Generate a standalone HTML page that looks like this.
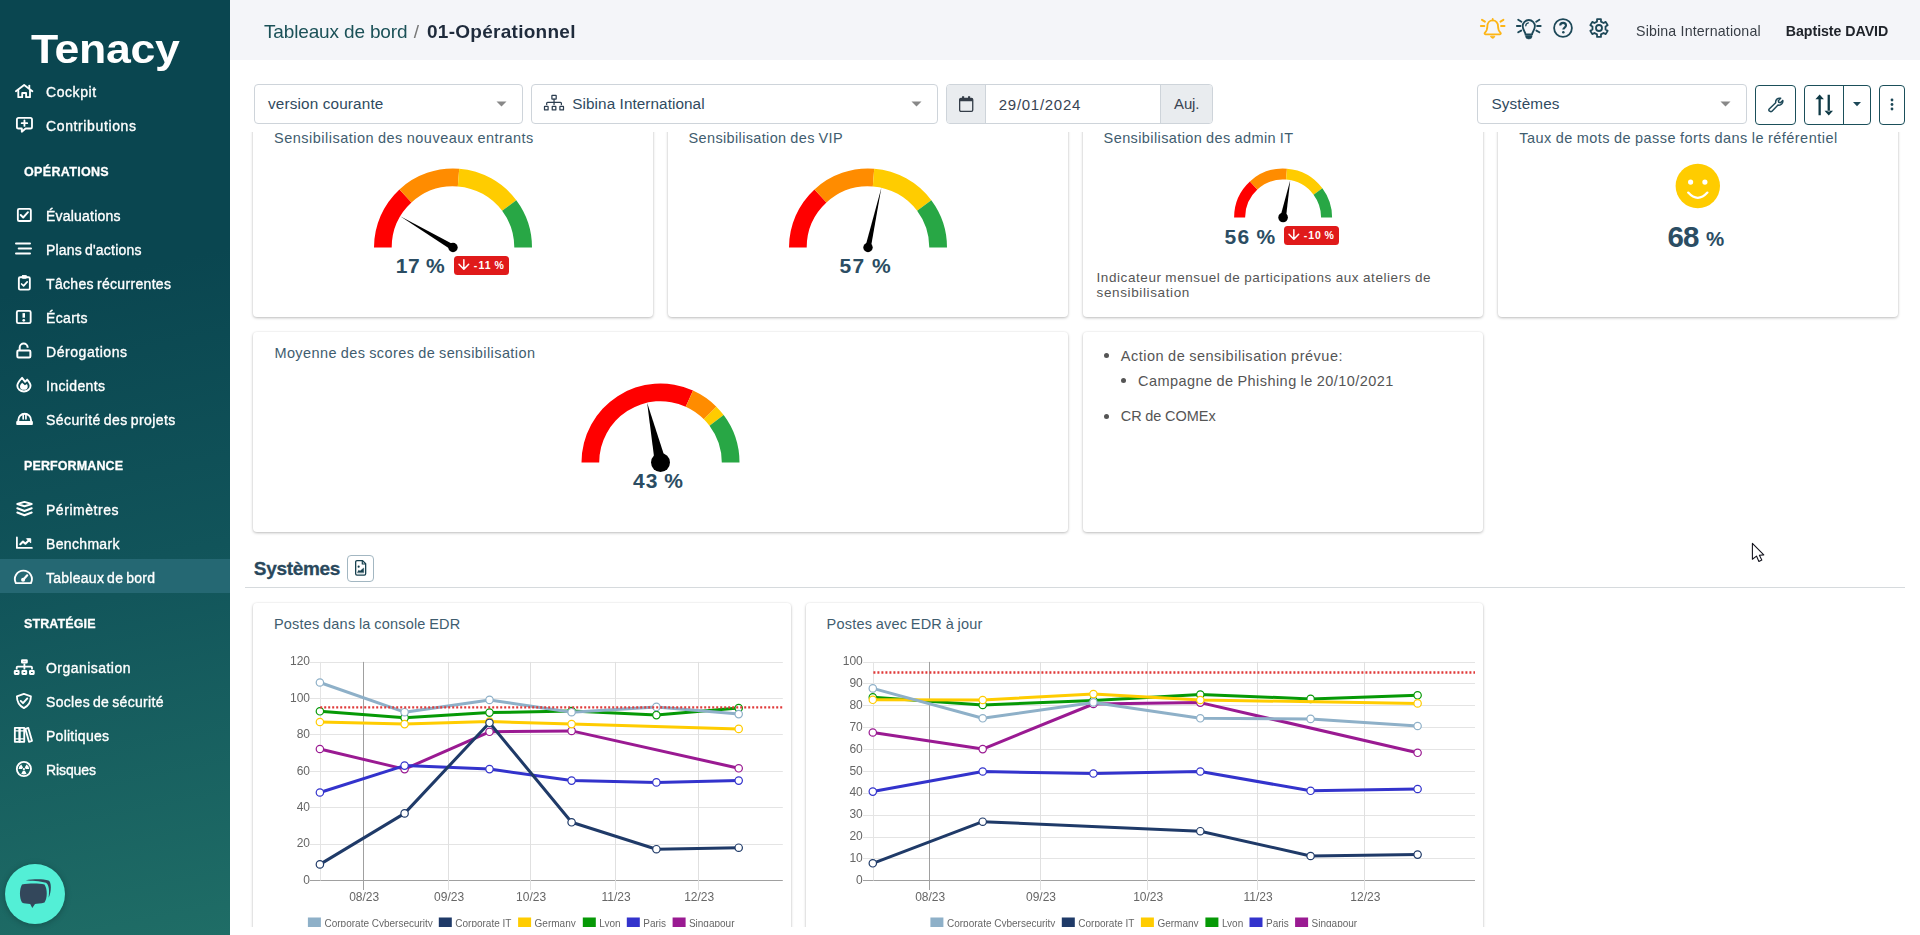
<!DOCTYPE html>
<html lang="fr"><head><meta charset="utf-8"><title>Tenacy - Tableaux de bord</title>
<style>
html,body{margin:0;padding:0}
body{width:1920px;height:935px;overflow:hidden;background:#fff;position:relative;font-family:"Liberation Sans",sans-serif}
.t{position:absolute;white-space:pre;display:block}
.abs,svg.i{position:absolute;display:block}
svg.i{overflow:visible}
#side{position:absolute;left:0;top:0;width:230px;height:935px;will-change:transform;background:linear-gradient(168deg,#0a4650 0%,#0a4650 30%,#11545a 60%,#1f6d66 100%)}
#hdr{position:absolute;left:230px;top:0;width:1690px;height:60px;background:#f4f5f9}
.sel{position:absolute;box-sizing:border-box;border:1px solid #ced4da;border-radius:4px;background:#fff}
.btn{position:absolute;box-sizing:border-box;border:1px solid #1b4f5a;border-radius:4px;background:#fff}
#clip{position:absolute;left:230px;top:132px;width:1690px;height:795px;overflow:hidden}
#in{position:absolute;left:-230px;top:-132px;width:1920px;height:935px}
.card{position:absolute;box-sizing:border-box;background:#fff;border-radius:4px;box-shadow:0 1px 3px rgba(0,0,0,.26),0 0 0 1px rgba(0,0,0,.015)}
</style></head><body>
<div id="side">
<div class="abs" style="left:28px;top:28px;width:160px;height:50px"><span class="t" style="left:2.60px;top:0.64px;font-size:40px;line-height:40px;color:#fff;font-weight:700;transform:scaleX(1.115);transform-origin:0 0;letter-spacing:-0.3px;">Tenacy</span></div>
<div class="abs" style="left:0;top:559px;width:230px;height:34px;background:#256873"></div>
<span class="t" style="left:46.00px;top:85.15px;font-size:14px;line-height:14px;color:#fff;letter-spacing:0.569px;word-spacing:-1.2px;-webkit-text-stroke:0.35px #fff;">Cockpit</span>
<span class="t" style="left:46.00px;top:119.15px;font-size:14px;line-height:14px;color:#fff;letter-spacing:0.625px;word-spacing:-1.2px;-webkit-text-stroke:0.35px #fff;">Contributions</span>
<span class="t" style="left:46.00px;top:209.15px;font-size:14px;line-height:14px;color:#fff;letter-spacing:0.211px;word-spacing:-1.2px;-webkit-text-stroke:0.35px #fff;">Évaluations</span>
<span class="t" style="left:46.00px;top:243.15px;font-size:14px;line-height:14px;color:#fff;letter-spacing:0.212px;word-spacing:-1.2px;-webkit-text-stroke:0.35px #fff;">Plans d'actions</span>
<span class="t" style="left:46.00px;top:277.15px;font-size:14px;line-height:14px;color:#fff;letter-spacing:0.328px;word-spacing:-1.2px;-webkit-text-stroke:0.35px #fff;">Tâches récurrentes</span>
<span class="t" style="left:46.00px;top:311.15px;font-size:14px;line-height:14px;color:#fff;letter-spacing:0.362px;word-spacing:-1.2px;-webkit-text-stroke:0.35px #fff;">Écarts</span>
<span class="t" style="left:46.00px;top:345.15px;font-size:14px;line-height:14px;color:#fff;letter-spacing:0.550px;word-spacing:-1.2px;-webkit-text-stroke:0.35px #fff;">Dérogations</span>
<span class="t" style="left:46.00px;top:379.15px;font-size:14px;line-height:14px;color:#fff;letter-spacing:0.369px;word-spacing:-1.2px;-webkit-text-stroke:0.35px #fff;">Incidents</span>
<span class="t" style="left:46.00px;top:413.15px;font-size:14px;line-height:14px;color:#fff;letter-spacing:0.419px;word-spacing:-1.2px;-webkit-text-stroke:0.35px #fff;">Sécurité des projets</span>
<span class="t" style="left:46.00px;top:503.15px;font-size:14px;line-height:14px;color:#fff;letter-spacing:0.535px;word-spacing:-1.2px;-webkit-text-stroke:0.35px #fff;">Périmètres</span>
<span class="t" style="left:46.00px;top:537.15px;font-size:14px;line-height:14px;color:#fff;letter-spacing:0.336px;word-spacing:-1.2px;-webkit-text-stroke:0.35px #fff;">Benchmark</span>
<span class="t" style="left:46.00px;top:571.15px;font-size:14px;line-height:14px;color:#fff;letter-spacing:0.266px;word-spacing:-1.2px;-webkit-text-stroke:0.35px #fff;">Tableaux de bord</span>
<span class="t" style="left:46.00px;top:661.15px;font-size:14px;line-height:14px;color:#fff;letter-spacing:0.464px;word-spacing:-1.2px;-webkit-text-stroke:0.35px #fff;">Organisation</span>
<span class="t" style="left:46.00px;top:695.15px;font-size:14px;line-height:14px;color:#fff;letter-spacing:0.324px;word-spacing:-1.2px;-webkit-text-stroke:0.35px #fff;">Socles de sécurité</span>
<span class="t" style="left:46.00px;top:729.15px;font-size:14px;line-height:14px;color:#fff;letter-spacing:0.255px;word-spacing:-1.2px;-webkit-text-stroke:0.35px #fff;">Politiques</span>
<span class="t" style="left:46.00px;top:763.15px;font-size:14px;line-height:14px;color:#fff;letter-spacing:-0.099px;word-spacing:-1.2px;-webkit-text-stroke:0.35px #fff;">Risques</span>
<span class="t" style="left:24.00px;top:166.42px;font-size:12.5px;line-height:12.5px;color:#fff;font-weight:700;letter-spacing:0.330px;-webkit-text-stroke:0.3px #fff;">OPÉRATIONS</span>
<span class="t" style="left:24.00px;top:460.42px;font-size:12.5px;line-height:12.5px;color:#fff;font-weight:700;letter-spacing:0.108px;-webkit-text-stroke:0.3px #fff;">PERFORMANCE</span>
<span class="t" style="left:24.00px;top:618.42px;font-size:12.5px;line-height:12.5px;color:#fff;font-weight:700;letter-spacing:0.111px;-webkit-text-stroke:0.3px #fff;">STRATÉGIE</span>
<svg class="i" style="left:14.8px;top:83.9px" width="18.30" height="14.10" viewBox="0 0 18.30 14.10" fill="none" stroke="#fff" stroke-width="1.85" stroke-linecap="round" stroke-linejoin="round"><path d="M0.9 7.3 9.15 0.9 17.4 7.3"/><path d="M3.3 6.6V13.2H7.2V9H11.1V13.2H15V6.6"/><path d="M14.3 1.6V4.2"/></svg>
<svg class="i" style="left:15.8px;top:117.2px" width="16.90" height="15.70" viewBox="0 0 16.90 15.70" fill="none" stroke="#fff" stroke-width="1.85" stroke-linecap="round" stroke-linejoin="round"><path d="M2.5 .9H14.4a1.6 1.6 0 0 1 1.6 1.6V9.9a1.6 1.6 0 0 1-1.6 1.6H9.6L5.8 14.7V11.5H2.5A1.6 1.6 0 0 1 .9 9.9V2.5A1.6 1.6 0 0 1 2.5.9Z"/><path d="M8.45 3.5V8.9M5.7 6.2H11.2"/></svg>
<svg class="i" style="left:16.6px;top:208px" width="14.70" height="13.90" viewBox="0 0 14.70 13.90" fill="none" stroke="#fff" stroke-width="1.85" stroke-linecap="round" stroke-linejoin="round"><rect x=".85" y=".85" width="13" height="12.2" rx="1.4"/><path d="M3.7 7 6.2 9.5 11 4.2" stroke-width="1.9"/></svg>
<svg class="i" style="left:14.6px;top:242px" width="17.00" height="13.00" viewBox="0 0 17.00 13.00" fill="none" stroke="#fff" stroke-width="1.85" stroke-linecap="round" stroke-linejoin="round"><path d="M1 1.5H15M3.7 6.5H16M1 11.5H15" stroke-width="2"/></svg>
<svg class="i" style="left:17.8px;top:275.4px" width="12.70" height="15.50" viewBox="0 0 12.70 15.50" fill="none" stroke="#fff" stroke-width="1.85" stroke-linecap="round" stroke-linejoin="round"><rect x=".85" y="2.2" width="11" height="12.4" rx="1.3"/><rect x="3.9" y=".6" width="4.9" height="2.6" rx=".9" fill="#fff" stroke-width="1"/><path d="M3.6 9 5.6 10.9 9.2 6.9" stroke-width="1.7"/></svg>
<svg class="i" style="left:16.2px;top:309.7px" width="15.50" height="14.00" viewBox="0 0 15.50 14.00" fill="none" stroke="#fff" stroke-width="1.85" stroke-linecap="round" stroke-linejoin="round"><rect x=".85" y=".85" width="13.8" height="12.3" rx="1.4"/><path d="M7.75 3.1V7.7" stroke-width="2.5" stroke-linecap="butt"/><circle cx="7.75" cy="10.3" r="1.35" fill="#fff" stroke="none"/></svg>
<svg class="i" style="left:16.2px;top:342.4px" width="15.70" height="16.80" viewBox="0 0 15.70 16.80" fill="none" stroke="#fff" stroke-width="1.85" stroke-linecap="round" stroke-linejoin="round"><rect x="1.300" y="8.500" width="13.100" height="7" rx="1.200" stroke-width="2"/><path d="M3.700 8.500V5.300A3.980 3.980 0 0 1 11.650 5.300V5.700" stroke-width="2" stroke-linecap="butt"/></svg>
<svg class="i" style="left:16.2px;top:376.2px" width="15.80" height="17.00" viewBox="0 0 15.80 17.00" fill="none" stroke="#fff" stroke-width="1.85" stroke-linecap="round" stroke-linejoin="round"><path d="M6.070 1.830 9.150 5.810 11.200 3.630C12.800 5.500 14.540 7.800 14.540 9.660A6.610 5.900 0 0 1 1.320 9.660C1.320 7 3.800 4.200 6.070 1.830Z" stroke-width="1.900"/><path d="M6.070 6.840 8.890 9.150 10.940 8.120C11.500 9 11.700 9.800 11.700 10.700A3.850 3.100 0 0 1 4 10.700C4 9.300 5 8 6.070 6.840Z" fill="#fff" stroke="none"/></svg>
<svg class="i" style="left:15.5px;top:412.1px" width="17.10" height="13.20" viewBox="0 0 17.10 13.20" fill="none" stroke="#fff" stroke-width="1.85" stroke-linecap="round" stroke-linejoin="round"><path d="M2.300 9.100V8.150A6.370 6.370 0 0 1 15.050 8.150V9.100" stroke-width="1.900"/><path d="M7.200 6.800V1.750H9.950V6.800" stroke-width="1.700"/><rect x=".2" y="9.100" width="16.700" height="3.900" rx=".9" fill="#fff" stroke="none"/></svg>
<svg class="i" style="left:15.6px;top:501.2px" width="17.10" height="15.80" viewBox="0 0 17.10 15.80" fill="none" stroke="#fff" stroke-width="1.85" stroke-linecap="round" stroke-linejoin="round"><path d="M8.500 .9 15.700 3.050 8.500 5.200 1.300 3.050Z" stroke-width="2"/><path d="M1.300 7.200 8.500 10 15.700 7.200M1.300 11.500 8.500 14.300 15.700 11.500" stroke-width="2"/></svg>
<svg class="i" style="left:15.6px;top:537px" width="16.90" height="11.80" viewBox="0 0 16.90 11.80" fill="none" stroke="#fff" stroke-width="1.85" stroke-linecap="round" stroke-linejoin="round"><path d="M.9.500V10.900H15.900" stroke-width="1.800"/><path d="M4.300 7.200 7 4.600 9.400 6.700 13.200 3" stroke-width="2.1"/><path d="M10.900 1.700H14.700V5.500Z" fill="#fff" stroke-width="1"/></svg>
<svg class="i" style="left:14.1px;top:570px" width="18.80" height="14.10" viewBox="0 0 18.80 14.10" fill="none" stroke="#fff" stroke-width="1.85" stroke-linecap="round" stroke-linejoin="round"><path d="M1.900 13.200A8.500 8.500 0 1 1 16.900 13.200Z"/><path d="M9.400 9.600 13.200 5.300" stroke-width="2.200"/><circle cx="9.100" cy="9.800" r="2.050" fill="#fff" stroke="none"/></svg>
<svg class="i" style="left:13.7px;top:659px" width="21.00" height="16.00" viewBox="0 0 21.00 16.00" fill="none" stroke="#fff" stroke-width="1.85" stroke-linecap="round" stroke-linejoin="round"><rect x="8" y="1.200" width="4.800" height="2.400" rx=".3" stroke-width="2"/><path d="M10.400 4.600V10.600M2.700 10.600V8.600a.9 .9 0 0 1 .9-.9H17.100a.9 .9 0 0 1 .9 .9V10.600" stroke-width="1.800" stroke-linecap="butt"/><rect x=".8" y="11.900" width="3.800" height="3" rx=".3" stroke-width="2"/><rect x="8.400" y="11.900" width="3.800" height="3" rx=".3" stroke-width="2"/><rect x="16" y="11.900" width="3.700" height="3" rx=".3" stroke-width="2"/></svg>
<svg class="i" style="left:16.2px;top:692.7px" width="15.80" height="16.00" viewBox="0 0 15.80 16.00" fill="none" stroke="#fff" stroke-width="1.85" stroke-linecap="round" stroke-linejoin="round"><path d="M7.900.900 14.900 3.300C14.900 9 12.500 12.900 7.900 15.100 3.300 12.900.900 9 .900 3.300Z"/><path d="M4.700 7.900 7 10.200 11.300 5.400" stroke-width="1.900"/></svg>
<svg class="i" style="left:14.3px;top:727.2px" width="18.90" height="15.70" viewBox="0 0 18.90 15.70" fill="none" stroke="#fff" stroke-width="1.85" stroke-linecap="round" stroke-linejoin="round"><rect x=".85" y=".85" width="4.700" height="14"/><rect x="5.550" y=".85" width="4.700" height="14"/><path d="M.85 3.800H10.250M.85 11.900H10.250" stroke-width="1.300"/><path d="M11.400 1.900 14.300.900 18 13.800 15 14.800Z"/></svg>
<svg class="i" style="left:16.2px;top:760.9px" width="15.80" height="16.10" viewBox="0 0 15.80 16.10" fill="none" stroke="#fff" stroke-width="1.85" stroke-linecap="round" stroke-linejoin="round"><circle cx="7.900" cy="8.050" r="7.100"/><path d="M8.75 9.52L10.55 12.64A5.3 5.3 0 0 1 5.25 12.64L7.05 9.52A1.7 1.7 0 0 0 8.75 9.52Z" fill="#fff" stroke="none"/><path d="M6.20 8.05L2.60 8.05A5.3 5.3 0 0 1 5.25 3.46L7.05 6.58A1.7 1.7 0 0 0 6.20 8.05Z" fill="#fff" stroke="none"/><path d="M8.75 6.58L10.55 3.46A5.3 5.3 0 0 1 13.20 8.05L9.60 8.05A1.7 1.7 0 0 0 8.75 6.58Z" fill="#fff" stroke="none"/><circle cx="7.900" cy="8.050" r="1.150" fill="#fff" stroke="none"/></svg>
<div class="abs" style="left:5px;top:864px;width:60px;height:60px;border-radius:50%;background:#53efd6;box-shadow:0 1px 6px rgba(0,0,0,.25)"></div>
<svg class="i" style="left:5px;top:864px" width="60" height="60" viewBox="0 0 60 60"><path d="M20.700 16.300C28 15 38 14.800 43.500 16.400 46.500 17.300 46.800 28 43.600 33.700 44.600 27 44.200 21 41 18.800 35 17 26 17 20.700 16.300Z" fill="#33475b"/><path d="M17 20.500C24 19.300 34 19.300 39.500 20.500 42.500 25 42.500 34 39.500 38.500 36 39.500 32 39.900 30 40L27.300 44 25.200 40C22 39.900 19 39.500 17 38.500 14.300 34 14.300 25 17 20.500Z" fill="#33475b"/></svg>
</div>
<div id="hdr"></div><div class="abs" style="left:0;top:0;width:1920px;height:60px;will-change:transform">
<span class="t" style="left:264.00px;top:21.92px;font-size:19px;line-height:19px;color:#1b5158;letter-spacing:-0.152px;">Tableaux de bord</span>
<span class="t" style="left:413.80px;top:21.92px;font-size:19px;line-height:19px;color:#777;">/</span>
<span class="t" style="left:427.00px;top:21.92px;font-size:19px;line-height:19px;color:#1f2b3c;font-weight:700;letter-spacing:0.275px;">01-Opérationnel</span>
<span class="t" style="left:1636.00px;top:23.98px;font-size:14.2px;line-height:14.2px;color:#383e46;letter-spacing:0.165px;">Sibina International</span>
<span class="t" style="left:1785.80px;top:23.98px;font-size:14.2px;line-height:14.2px;color:#20242b;font-weight:700;letter-spacing:-0.047px;">Baptiste DAVID</span>
<svg class="i" style="left:1480.2px;top:17.8px" width="25.60" height="21.20" viewBox="0 0 25.60 21.20" fill="none" stroke="#fdb515" stroke-width="1.8" stroke-linecap="round" stroke-linejoin="round"><path d="M12.700 1V2.300"/><path d="M12.700 2.400c-3.300 0-5.300 2.500-5.300 5.600 0 4-1.300 5.600-2.600 6.800-.5.500-.2 1.500.6 1.500H20c.8 0 1.100-1 .6-1.500-1.300-1.200-2.600-2.800-2.600-6.800 0-3.100-2-5.600-5.300-5.600Z"/><path d="M10.700 18.600c.3 1 1.100 1.600 2 1.600s1.700-.6 2-1.600Z" fill="#fdb515" stroke-width="1"/><path d="M2 1.800 4.900 3.600M.9 8H4.300M23.400 1.800 20.500 3.600M24.500 8H21.100" stroke-width="2"/></svg>
<svg class="i" style="left:1515.6px;top:17.8px" width="25.60" height="21.20" viewBox="0 0 25.60 21.20" fill="none" stroke="#1d4858" stroke-width="1.8" stroke-linecap="round" stroke-linejoin="round"><path d="M9.500 16.400c0-2.300-2.800-4-2.800-8.300a6.100 6.100 0 0 1 12.200 0c0 4.300-2.800 6-2.800 8.300Z"/><path d="M9.800 7.800a3 3 0 0 1 2.600-3" stroke-width="1.300"/><path d="M9.600 17.600H16V18.600a3.200 2.400 0 0 1-6.400 0Z" fill="#1d4858" stroke-width=".6"/><path d="M2.200 1.700 5.400 3.700M.9 8H4.500M2.200 14.300 5.200 12.600M23.400 1.700 20.200 3.700M24.700 8H21.100M23.400 14.300 20.400 12.600" stroke-width="1.900"/></svg>
<svg class="i" style="left:1553px;top:18.4px" width="20.00" height="20.00" viewBox="0 0 20.00 20.00" fill="none" stroke="#1d4858" stroke-width="1.8" stroke-linecap="round" stroke-linejoin="round"><circle cx="10" cy="10" r="8.900"/><path d="M7.200 7.600a2.900 2.700 0 0 1 5.800 0c0 1.800-2.700 2.100-2.700 3.900" stroke-width="2.100" stroke-linecap="butt"/><circle cx="10.300" cy="14.300" r="1.250" fill="#1d4858" stroke="none"/></svg>
<svg class="i" style="left:1589.1px;top:18.4px" width="20.00" height="20.00" viewBox="0 0 20.00 20.00" fill="none" stroke="#1d4858" stroke-width="1.8" stroke-linecap="round" stroke-linejoin="round"><path d="M8.02 3.60L8.05 1.11L11.95 1.11L11.98 3.60L14.55 5.08L16.72 3.87L18.67 7.24L16.53 8.51L16.53 11.49L18.67 12.76L16.72 16.13L14.55 14.92L11.98 16.40L11.95 18.89L8.05 18.89L8.02 16.40L5.45 14.92L3.28 16.13L1.33 12.76L3.47 11.49L3.47 8.51L1.33 7.24L3.28 3.87L5.45 5.08Z"/><circle cx="10" cy="10" r="3"/></svg>
</div>
<div class="sel" style="left:254px;top:84px;width:269px;height:40px"></div>
<span class="t" style="left:268.00px;top:96.35px;font-size:15.3px;line-height:15.3px;color:#2f4a60;letter-spacing:0.147px;">version courante</span>
<svg class="i" style="left:496px;top:101px" width="11" height="6" viewBox="0 0 11 6"><path d="M.5.500H10.500L5.500 5.500Z" fill="#888"/></svg>
<div class="sel" style="left:531px;top:84px;width:407px;height:40px"></div>
<svg class="i" style="left:544.4px;top:95px" width="20.20" height="15.80" viewBox="0 0 20.20 15.80" fill="none" stroke="#2c3e50" stroke-width="1.25" stroke-linecap="round" stroke-linejoin="round"><rect x="7.900" y=".4" width="4.300" height="3.600" rx=".3"/><path d="M10.050 4.200V9.400M2.700 9.600V8.300a.9 .9 0 0 1 .9-.9H16.500a.9 .9 0 0 1 .9 .9V9.600"/><rect x=".5" y="11.400" width="3.600" height="3.600" rx=".3"/><rect x="8.250" y="11.400" width="3.600" height="3.600" rx=".3"/><rect x="15.900" y="11.400" width="3.600" height="3.600" rx=".3"/></svg>
<span class="t" style="left:572.30px;top:96.35px;font-size:15.3px;line-height:15.3px;color:#2f4a60;letter-spacing:0.070px;">Sibina International</span>
<svg class="i" style="left:910.500px;top:101px" width="11" height="6" viewBox="0 0 11 6"><path d="M.5.500H10.500L5.500 5.500Z" fill="#888"/></svg>
<div class="sel" style="left:946px;top:84px;width:267px;height:40px;overflow:hidden"><div class="abs" style="left:0;top:0;width:38px;height:38px;background:#e9ecef;border-right:1px solid #ced4da"></div><div class="abs" style="left:213px;top:0;width:52px;height:38px;background:#e9ecef;border-left:1px solid #ced4da"></div></div>
<svg class="i" style="left:959px;top:96px" width="14.40" height="16.10" viewBox="0 0 14.40 16.10" fill="none" stroke="#343d48" stroke-width="1.3" stroke-linecap="round" stroke-linejoin="round"><rect x=".65" y="2.400" width="13.100" height="13" rx="1.300"/><path d="M.65 3.700a1.300 1.300 0 0 1 1.300-1.300H12.450a1.300 1.300 0 0 1 1.300 1.300V5.200H.65Z" fill="#343d48" stroke="none"/><path d="M4.100 .2V2.600M10.100 .2V2.600" stroke-width="2.100" stroke-linecap="butt"/></svg>
<span class="t" style="left:998.80px;top:96.60px;font-size:15px;line-height:15px;color:#384454;letter-spacing:0.714px;">29/01/2024</span>
<span class="t" style="left:1174.00px;top:95.60px;font-size:15px;line-height:15px;color:#3a4452;letter-spacing:-0.120px;">Auj.</span>
<div class="sel" style="left:1477px;top:84px;width:270px;height:40px"></div>
<span class="t" style="left:1491.50px;top:96.35px;font-size:15.3px;line-height:15.3px;color:#2f4a60;letter-spacing:0.121px;">Systèmes</span>
<svg class="i" style="left:1719.500px;top:101px" width="11" height="6" viewBox="0 0 11 6"><path d="M.5.500H10.500L5.500 5.500Z" fill="#888"/></svg>
<div class="btn" style="left:1755px;top:85px;width:41px;height:40px"></div>
<svg class="i" style="left:1767.600px;top:96.600px" width="15.600" height="15.600" viewBox="0 0 17 17" fill="none" stroke="#1d4858" stroke-width="1.600" stroke-linecap="round" stroke-linejoin="round"><path d="M2.300 15.600a1.500 1.500 0 0 1-1-2.500L8.400 6.300A4.300 4.300 0 0 1 13.800 1.400L11.200 4 11.700 5.800 13.500 6.300 16.100 3.700A4.300 4.300 0 0 1 10.900 8.800L4.100 15.800A1.500 1.500 0 0 1 2.300 15.600Z"/></svg>
<div class="btn" style="left:1804px;top:85px;width:67px;height:40px"></div><div class="abs" style="left:1843px;top:85px;width:1px;height:40px;background:#1b4f5a"></div>
<svg class="i" style="left:1814px;top:94px" width="20" height="22" viewBox="0 0 20 22" fill="#0f3a46" stroke="none"><path d="M4.500 4.500H6.800V21.300H4.500ZM5.650 .5 9.900 5.300H1.400Z"/><path d="M13.600 .8H15.900V17.600H13.600ZM14.750 21.600 19 16.800H10.500Z"/></svg>
<svg class="i" style="left:1852.900px;top:101.900px" width="8" height="4.300" viewBox="0 0 8 4.300"><path d="M0 0H8L4 4.300Z" fill="#1d4858"/></svg>
<div class="btn" style="left:1879px;top:85px;width:26px;height:40px"></div>
<svg class="i" style="left:1889.700px;top:97.800px" width="4" height="15" viewBox="0 0 4 15" fill="#1d4858"><circle cx="2" cy="2" r="1.400"/><circle cx="2" cy="6.500" r="1.400"/><circle cx="2" cy="11" r="1.400"/></svg>
<div id="clip"><div id="in">
<div class="card" style="left:253px;top:60px;width:400px;height:257px"></div>
<div class="card" style="left:668px;top:60px;width:400px;height:257px"></div>
<div class="card" style="left:1083px;top:60px;width:400px;height:257px"></div>
<div class="card" style="left:1498px;top:60px;width:400px;height:257px"></div>
<div class="card" style="left:253px;top:332px;width:815px;height:200px"></div>
<div class="card" style="left:1083px;top:332px;width:400px;height:200px"></div>
<div class="card" style="left:253px;top:603px;width:538px;height:360px"></div>
<div class="card" style="left:806px;top:603px;width:677px;height:360px"></div>
<span class="t" style="left:274.00px;top:130.83px;font-size:14.5px;line-height:14.5px;color:#3f5d6f;letter-spacing:0.491px;word-spacing:-0.6px;">Sensibilisation des nouveaux entrants</span>
<span class="t" style="left:688.60px;top:130.83px;font-size:14.5px;line-height:14.5px;color:#3f5d6f;letter-spacing:0.349px;word-spacing:-0.6px;">Sensibilisation des VIP</span>
<span class="t" style="left:1103.60px;top:130.83px;font-size:14.5px;line-height:14.5px;color:#3f5d6f;letter-spacing:0.398px;word-spacing:-0.6px;">Sensibilisation des admin IT</span>
<span class="t" style="left:1519.20px;top:130.83px;font-size:14.5px;line-height:14.5px;color:#3f5d6f;letter-spacing:0.482px;word-spacing:-0.6px;">Taux de mots de passe forts dans le référentiel</span>
<span class="t" style="left:274.40px;top:345.83px;font-size:14.5px;line-height:14.5px;color:#3f5d6f;letter-spacing:0.409px;word-spacing:-0.6px;">Moyenne des scores de sensibilisation</span>
<span class="t" style="left:274.00px;top:616.83px;font-size:14.5px;line-height:14.5px;color:#3f5d6f;letter-spacing:0.193px;word-spacing:-0.6px;">Postes dans la console EDR</span>
<span class="t" style="left:826.60px;top:616.83px;font-size:14.5px;line-height:14.5px;color:#3f5d6f;letter-spacing:0.199px;word-spacing:-0.6px;">Postes avec EDR à jour</span>
<svg class="i" style="left:0;top:0" width="1920" height="935" viewBox="0 0 1920 935"><path d="M374.00 247.50A79 79 0 0 1 399.47 189.40L411.46 202.42A61.3 61.3 0 0 0 391.70 247.50Z" fill="#ff0000"/><path d="M399.47 189.40A79 79 0 0 1 459.20 168.74L457.81 186.39A61.3 61.3 0 0 0 411.46 202.42Z" fill="#ff8c00"/><path d="M459.20 168.74A79 79 0 0 1 516.32 200.27L502.14 210.85A61.3 61.3 0 0 0 457.81 186.39Z" fill="#ffcc00"/><path d="M516.32 200.27A79 79 0 0 1 532.00 247.50L514.30 247.50A61.3 61.3 0 0 0 502.14 210.85Z" fill="#28a745"/><path d="M400.24 216.30L454.44 245.07L451.56 249.93Z" fill="#000"/><circle cx="453" cy="247.5" r="4.7" fill="#000"/><path d="M789.00 247.50A79 79 0 0 1 814.47 189.40L826.46 202.42A61.3 61.3 0 0 0 806.70 247.50Z" fill="#ff0000"/><path d="M814.47 189.40A79 79 0 0 1 874.20 168.74L872.81 186.39A61.3 61.3 0 0 0 826.46 202.42Z" fill="#ff8c00"/><path d="M874.20 168.74A79 79 0 0 1 931.32 200.27L917.14 210.85A61.3 61.3 0 0 0 872.81 186.39Z" fill="#ffcc00"/><path d="M931.32 200.27A79 79 0 0 1 947.00 247.50L929.30 247.50A61.3 61.3 0 0 0 917.14 210.85Z" fill="#28a745"/><path d="M881.37 187.68L870.75 248.12L865.25 246.88Z" fill="#000"/><circle cx="868" cy="247.5" r="4.7" fill="#000"/><path d="M1234.10 217.50A49 49 0 0 1 1249.90 181.47L1257.35 189.56A38 38 0 0 0 1245.10 217.50Z" fill="#ff0000"/><path d="M1249.90 181.47A49 49 0 0 1 1286.94 168.65L1286.08 179.62A38 38 0 0 0 1257.35 189.56Z" fill="#ff8c00"/><path d="M1286.94 168.65A49 49 0 0 1 1322.38 188.20L1313.56 194.78A38 38 0 0 0 1286.08 179.62Z" fill="#ffcc00"/><path d="M1322.38 188.20A49 49 0 0 1 1332.10 217.50L1321.10 217.50A38 38 0 0 0 1313.56 194.78Z" fill="#28a745"/><path d="M1290.22 180.17L1285.93 218.04L1280.27 216.96Z" fill="#000"/><circle cx="1283.1" cy="217.5" r="4.8" fill="#000"/><path d="M581.50 462.50A79 79 0 0 1 693.01 390.50L685.73 406.63A61.3 61.3 0 0 0 599.20 462.50Z" fill="#ff0000"/><path d="M693.01 390.50A79 79 0 0 1 716.36 406.64L703.85 419.15A61.3 61.3 0 0 0 685.73 406.63Z" fill="#ff8c00"/><path d="M716.36 406.64A79 79 0 0 1 723.68 415.07L709.52 425.69A61.3 61.3 0 0 0 703.85 419.15Z" fill="#ffcc00"/><path d="M723.68 415.07A79 79 0 0 1 739.50 462.50L721.80 462.50A61.3 61.3 0 0 0 709.52 425.69Z" fill="#28a745"/><path d="M647.13 402.68L666.06 461.26L654.94 463.74Z" fill="#000"/><circle cx="660.5" cy="462.5" r="9.5" fill="#000"/><circle cx="1697.800" cy="186" r="22.200" fill="#ffcc00"/><circle cx="1690.600" cy="182.100" r="2.600" fill="#fff"/><circle cx="1704.900" cy="182.100" r="2.600" fill="#fff"/><path d="M1688.200 192.600Q1697.800 203.200 1707.400 192.600" fill="none" stroke="#fff" stroke-width="2.300" stroke-linecap="round"/></svg>
<span class="t" style="left:395.70px;top:255.22px;font-size:21px;line-height:21px;color:#2b4d63;font-weight:700;letter-spacing:0.743px;word-spacing:-1.2px;">17 %</span>
<span class="t" style="left:839.40px;top:255.22px;font-size:21px;line-height:21px;color:#2b4d63;font-weight:700;letter-spacing:1.509px;word-spacing:-1.2px;">57 %</span>
<span class="t" style="left:1224.60px;top:226.22px;font-size:21px;line-height:21px;color:#2b4d63;font-weight:700;letter-spacing:1.276px;word-spacing:-1.2px;">56 %</span>
<span class="t" style="left:632.90px;top:470.22px;font-size:21px;line-height:21px;color:#2b4d63;font-weight:700;letter-spacing:1.143px;word-spacing:-1.2px;">43 %</span>
<span class="t" style="left:1667.50px;top:221.83px;font-size:29.5px;line-height:29.5px;color:#2b4d63;font-weight:700;letter-spacing:-0.828px;">68</span>
<span class="t" style="left:1705.90px;top:229.45px;font-size:20.5px;line-height:20.5px;color:#2b4d63;font-weight:700;letter-spacing:-0.334px;">%</span>
<div class="abs" style="left:454.1px;top:255.9px;width:55.100px;height:19px;border-radius:3.500px;background:#e01a1a"></div><svg class="i" style="left:458.40000000000003px;top:259.0px" width="11.700" height="11.200" viewBox="0 0 11.700 11.200" fill="none" stroke="#fff" stroke-width="1.500" stroke-linecap="round" stroke-linejoin="round"><path d="M5.850 .8V10M1 5.200 5.850 10.200 10.700 5.200"/></svg><span class="t" style="left:473.80px;top:260.11px;font-size:10.5px;line-height:10.5px;color:#fff;font-weight:700;letter-spacing:1.086px;word-spacing:-1.2px;">-11 %</span>
<div class="abs" style="left:1284.1px;top:225.9px;width:55.100px;height:19px;border-radius:3.500px;background:#e01a1a"></div><svg class="i" style="left:1288.3999999999999px;top:229.0px" width="11.700" height="11.200" viewBox="0 0 11.700 11.200" fill="none" stroke="#fff" stroke-width="1.500" stroke-linecap="round" stroke-linejoin="round"><path d="M5.850 .8V10M1 5.200 5.850 10.200 10.700 5.200"/></svg><span class="t" style="left:1303.80px;top:230.11px;font-size:10.5px;line-height:10.5px;color:#fff;font-weight:700;letter-spacing:0.941px;word-spacing:-1.2px;">-10 %</span>
<span class="t" style="left:1096.50px;top:270.77px;font-size:13.5px;line-height:13.5px;color:#555;letter-spacing:0.575px;word-spacing:-0.5px;">Indicateur mensuel de participations aux ateliers de</span>
<span class="t" style="left:1096.50px;top:285.57px;font-size:13.5px;line-height:13.5px;color:#555;letter-spacing:0.625px;">sensibilisation</span>
<span class="t" style="left:1120.80px;top:348.53px;font-size:14.5px;line-height:14.5px;color:#555;letter-spacing:0.511px;word-spacing:-0.6px;">Action de sensibilisation prévue:</span>
<span class="t" style="left:1138.00px;top:373.53px;font-size:14.5px;line-height:14.5px;color:#555;letter-spacing:0.456px;word-spacing:-0.6px;">Campagne de Phishing le 20/10/2021</span>
<span class="t" style="left:1120.80px;top:409.43px;font-size:14.5px;line-height:14.5px;color:#555;letter-spacing:0.031px;word-spacing:-0.6px;">CR de COMEx</span>
<div class="abs" style="left:1103.6px;top:353.1px;width:5.400px;height:5.400px;border-radius:50%;background:#555"></div>
<div class="abs" style="left:1120.6px;top:378.1px;width:5.400px;height:5.400px;border-radius:50%;background:#555"></div>
<div class="abs" style="left:1103.6px;top:414.0px;width:5.400px;height:5.400px;border-radius:50%;background:#555"></div>
<span class="t" style="left:253.80px;top:558.92px;font-size:19px;line-height:19px;color:#29485c;font-weight:700;letter-spacing:-0.319px;-webkit-text-stroke:0.3px #29485c;">Systèmes</span>
<div class="abs" style="left:347px;top:555px;width:27px;height:27px;box-sizing:border-box;border:1px solid #a3b7c2;border-radius:4px"></div>
<svg class="i" style="left:354.9px;top:560px" width="11.30" height="15.80" viewBox="0 0 11.30 15.80" fill="none" stroke="#17414f" stroke-width="1.3" stroke-linecap="round" stroke-linejoin="round"><path d="M.65 2A1.350 1.350 0 0 1 2 .65H7.600L10.650 3.700V13.800A1.350 1.350 0 0 1 9.300 15.150H2A1.350 1.350 0 0 1 .65 13.800Z"/><path d="M7.300 .9V4H10.400" stroke-width="1.200"/><circle cx="3.650" cy="6.700" r="1.100" fill="#17414f" stroke="none"/><path d="M2.550 12.500 3.650 10.200 5.100 11 8.700 8V12.500Z" fill="#17414f" stroke-width=".4"/></svg>
<div class="abs" style="left:245px;top:587px;width:1660px;height:1px;background:#d6dadd"></div>
<svg class="i" style="left:0;top:0;will-change:transform;font-family:'Liberation Sans',sans-serif" width="1920" height="935" viewBox="0 0 1920 935"><path d="M310 880.5H782.8" stroke="#a0a0a0" stroke-width="1"/><text x="310" y="883.8" text-anchor="end" font-size="12" fill="#666">0</text><path d="M310 844.5H782.8" stroke="#e4e4e4" stroke-width="1"/><text x="310" y="847.4" text-anchor="end" font-size="12" fill="#666">20</text><path d="M310 807.5H782.8" stroke="#e4e4e4" stroke-width="1"/><text x="310" y="810.9" text-anchor="end" font-size="12" fill="#666">40</text><path d="M310 771.5H782.8" stroke="#e4e4e4" stroke-width="1"/><text x="310" y="774.5" text-anchor="end" font-size="12" fill="#666">60</text><path d="M310 734.5H782.8" stroke="#e4e4e4" stroke-width="1"/><text x="310" y="738.1" text-anchor="end" font-size="12" fill="#666">80</text><path d="M310 698.5H782.8" stroke="#e4e4e4" stroke-width="1"/><text x="310" y="701.6" text-anchor="end" font-size="12" fill="#666">100</text><path d="M310 662.5H782.8" stroke="#e4e4e4" stroke-width="1"/><text x="310" y="665.2" text-anchor="end" font-size="12" fill="#666">120</text><path d="M320.5 661.9V880.5" stroke="#e4e4e4" stroke-width="1"/><path d="M363.5 661.9V890.0" stroke="#a0a0a0" stroke-width="1"/><text x="364.2" y="901" text-anchor="middle" font-size="12" fill="#666">08/23</text><path d="M448.5 661.9V890.0" stroke="#e0e0e0" stroke-width="1"/><text x="449.1" y="901" text-anchor="middle" font-size="12" fill="#666">09/23</text><path d="M530.5 661.9V890.0" stroke="#e0e0e0" stroke-width="1"/><text x="531.1" y="901" text-anchor="middle" font-size="12" fill="#666">10/23</text><path d="M615.5 661.9V890.0" stroke="#e0e0e0" stroke-width="1"/><text x="616.0" y="901" text-anchor="middle" font-size="12" fill="#666">11/23</text><path d="M698.5 661.9V890.0" stroke="#e0e0e0" stroke-width="1"/><text x="699.2" y="901" text-anchor="middle" font-size="12" fill="#666">12/23</text><path d="M319.9 749.0L404.6 769.1L489.5 731.8L571.6 730.9L738.7 768.3" fill="none" stroke="#9a1a92" stroke-width="3" stroke-linejoin="round"/><circle cx="319.9" cy="749.0" r="3.700" fill="#fff" stroke="#9a1a92" stroke-width="1.200"/><circle cx="404.6" cy="769.1" r="3.700" fill="#fff" stroke="#9a1a92" stroke-width="1.200"/><circle cx="489.5" cy="731.8" r="3.700" fill="#fff" stroke="#9a1a92" stroke-width="1.200"/><circle cx="571.6" cy="730.9" r="3.700" fill="#fff" stroke="#9a1a92" stroke-width="1.200"/><circle cx="738.7" cy="768.3" r="3.700" fill="#fff" stroke="#9a1a92" stroke-width="1.200"/><path d="M319.9 792.5L404.6 765.6L489.5 769.1L571.6 780.6L656.4 782.4L738.7 780.6" fill="none" stroke="#3333cc" stroke-width="3" stroke-linejoin="round"/><circle cx="319.9" cy="792.5" r="3.700" fill="#fff" stroke="#3333cc" stroke-width="1.200"/><circle cx="404.6" cy="765.6" r="3.700" fill="#fff" stroke="#3333cc" stroke-width="1.200"/><circle cx="489.5" cy="769.1" r="3.700" fill="#fff" stroke="#3333cc" stroke-width="1.200"/><circle cx="571.6" cy="780.6" r="3.700" fill="#fff" stroke="#3333cc" stroke-width="1.200"/><circle cx="656.4" cy="782.4" r="3.700" fill="#fff" stroke="#3333cc" stroke-width="1.200"/><circle cx="738.7" cy="780.6" r="3.700" fill="#fff" stroke="#3333cc" stroke-width="1.200"/><path d="M319.9 711.3L404.6 717.7L489.5 712.6L571.6 711.0L656.4 715.1L738.7 708.1" fill="none" stroke="#069906" stroke-width="3" stroke-linejoin="round"/><circle cx="319.9" cy="711.3" r="3.700" fill="#fff" stroke="#069906" stroke-width="1.200"/><circle cx="404.6" cy="717.7" r="3.700" fill="#fff" stroke="#069906" stroke-width="1.200"/><circle cx="489.5" cy="712.6" r="3.700" fill="#fff" stroke="#069906" stroke-width="1.200"/><circle cx="571.6" cy="711.0" r="3.700" fill="#fff" stroke="#069906" stroke-width="1.200"/><circle cx="656.4" cy="715.1" r="3.700" fill="#fff" stroke="#069906" stroke-width="1.200"/><circle cx="738.7" cy="708.1" r="3.700" fill="#fff" stroke="#069906" stroke-width="1.200"/><path d="M319.9 722.0L404.6 724.1L489.5 721.6L571.6 724.1L738.7 728.9" fill="none" stroke="#ffcc00" stroke-width="3" stroke-linejoin="round"/><circle cx="319.9" cy="722.0" r="3.700" fill="#fff" stroke="#ffcc00" stroke-width="1.200"/><circle cx="404.6" cy="724.1" r="3.700" fill="#fff" stroke="#ffcc00" stroke-width="1.200"/><circle cx="489.5" cy="721.6" r="3.700" fill="#fff" stroke="#ffcc00" stroke-width="1.200"/><circle cx="571.6" cy="724.1" r="3.700" fill="#fff" stroke="#ffcc00" stroke-width="1.200"/><circle cx="738.7" cy="728.9" r="3.700" fill="#fff" stroke="#ffcc00" stroke-width="1.200"/><path d="M319.9 864.4L404.6 813.4L489.5 722.8L571.6 822.3L656.4 849.2L738.7 847.7" fill="none" stroke="#1f3a68" stroke-width="3" stroke-linejoin="round"/><circle cx="319.9" cy="864.4" r="3.700" fill="#fff" stroke="#1f3a68" stroke-width="1.200"/><circle cx="404.6" cy="813.4" r="3.700" fill="#fff" stroke="#1f3a68" stroke-width="1.200"/><circle cx="489.5" cy="722.8" r="3.700" fill="#fff" stroke="#1f3a68" stroke-width="1.200"/><circle cx="571.6" cy="822.3" r="3.700" fill="#fff" stroke="#1f3a68" stroke-width="1.200"/><circle cx="656.4" cy="849.2" r="3.700" fill="#fff" stroke="#1f3a68" stroke-width="1.200"/><circle cx="738.7" cy="847.7" r="3.700" fill="#fff" stroke="#1f3a68" stroke-width="1.200"/><path d="M319.9 682.5L404.6 712.2L489.5 699.9L571.6 712.2L656.4 706.9L738.7 714.1" fill="none" stroke="#8eb0c8" stroke-width="3" stroke-linejoin="round"/><circle cx="319.9" cy="682.5" r="3.700" fill="#fff" stroke="#8eb0c8" stroke-width="1.200"/><circle cx="404.6" cy="712.2" r="3.700" fill="#fff" stroke="#8eb0c8" stroke-width="1.200"/><circle cx="489.5" cy="699.9" r="3.700" fill="#fff" stroke="#8eb0c8" stroke-width="1.200"/><circle cx="571.6" cy="712.2" r="3.700" fill="#fff" stroke="#8eb0c8" stroke-width="1.200"/><circle cx="656.4" cy="706.9" r="3.700" fill="#fff" stroke="#8eb0c8" stroke-width="1.200"/><circle cx="738.7" cy="714.1" r="3.700" fill="#fff" stroke="#8eb0c8" stroke-width="1.200"/><path d="M320.2 707.4H782.8" stroke="#e03a3a" stroke-width="2.400" stroke-dasharray="2 2"/><rect x="307.9" y="917.500" width="13" height="10" fill="#8eb0c8"/><text x="324.5" y="927.200" font-size="10" fill="#666">Corporate Cybersecurity</text><rect x="438.8" y="917.500" width="13" height="10" fill="#1f3a68"/><text x="455.3" y="927.200" font-size="10" fill="#666">Corporate IT</text><rect x="518.1" y="917.500" width="13" height="10" fill="#ffcc00"/><text x="534.6" y="927.200" font-size="10" fill="#666">Germany</text><rect x="582.8" y="917.500" width="13" height="10" fill="#069906"/><text x="599.3" y="927.200" font-size="10" fill="#666">Lyon</text><rect x="626.8" y="917.500" width="13" height="10" fill="#3333cc"/><text x="643.3" y="927.200" font-size="10" fill="#666">Paris</text><rect x="672.6" y="917.500" width="13" height="10" fill="#9a1a92"/><text x="688.9" y="927.200" font-size="10" fill="#666">Singapour</text><path d="M863 880.5H1475" stroke="#a0a0a0" stroke-width="1"/><text x="862.8" y="883.8" text-anchor="end" font-size="12" fill="#666">0</text><path d="M863 858.5H1475" stroke="#e4e4e4" stroke-width="1"/><text x="862.8" y="861.9" text-anchor="end" font-size="12" fill="#666">10</text><path d="M863 837.5H1475" stroke="#e4e4e4" stroke-width="1"/><text x="862.8" y="840.1" text-anchor="end" font-size="12" fill="#666">20</text><path d="M863 815.5H1475" stroke="#e4e4e4" stroke-width="1"/><text x="862.8" y="818.2" text-anchor="end" font-size="12" fill="#666">30</text><path d="M863 793.5H1475" stroke="#e4e4e4" stroke-width="1"/><text x="862.8" y="796.4" text-anchor="end" font-size="12" fill="#666">40</text><path d="M863 771.5H1475" stroke="#e4e4e4" stroke-width="1"/><text x="862.8" y="774.5" text-anchor="end" font-size="12" fill="#666">50</text><path d="M863 749.5H1475" stroke="#e4e4e4" stroke-width="1"/><text x="862.8" y="752.6" text-anchor="end" font-size="12" fill="#666">60</text><path d="M863 727.5H1475" stroke="#e4e4e4" stroke-width="1"/><text x="862.8" y="730.8" text-anchor="end" font-size="12" fill="#666">70</text><path d="M863 705.5H1475" stroke="#e4e4e4" stroke-width="1"/><text x="862.8" y="708.9" text-anchor="end" font-size="12" fill="#666">80</text><path d="M863 683.5H1475" stroke="#e4e4e4" stroke-width="1"/><text x="862.8" y="687.1" text-anchor="end" font-size="12" fill="#666">90</text><path d="M863 662.5H1475" stroke="#e4e4e4" stroke-width="1"/><text x="862.8" y="665.2" text-anchor="end" font-size="12" fill="#666">100</text><path d="M873.5 661.9V880.5" stroke="#e4e4e4" stroke-width="1"/><path d="M929.5 661.9V890.0" stroke="#a0a0a0" stroke-width="1"/><text x="930.2" y="901" text-anchor="middle" font-size="12" fill="#666">08/23</text><path d="M1040.5 661.9V890.0" stroke="#e0e0e0" stroke-width="1"/><text x="1041.0" y="901" text-anchor="middle" font-size="12" fill="#666">09/23</text><path d="M1147.5 661.9V890.0" stroke="#e0e0e0" stroke-width="1"/><text x="1148.2" y="901" text-anchor="middle" font-size="12" fill="#666">10/23</text><path d="M1257.5 661.9V890.0" stroke="#e0e0e0" stroke-width="1"/><text x="1258.0" y="901" text-anchor="middle" font-size="12" fill="#666">11/23</text><path d="M1364.5 661.9V890.0" stroke="#e0e0e0" stroke-width="1"/><text x="1365.3" y="901" text-anchor="middle" font-size="12" fill="#666">12/23</text><path d="M872.8 732.5L982.7 749.1L1093.4 704.0L1200.3 702.6L1417.6 752.8" fill="none" stroke="#9a1a92" stroke-width="3" stroke-linejoin="round"/><circle cx="872.8" cy="732.5" r="3.700" fill="#fff" stroke="#9a1a92" stroke-width="1.200"/><circle cx="982.7" cy="749.1" r="3.700" fill="#fff" stroke="#9a1a92" stroke-width="1.200"/><circle cx="1093.4" cy="704.0" r="3.700" fill="#fff" stroke="#9a1a92" stroke-width="1.200"/><circle cx="1200.3" cy="702.6" r="3.700" fill="#fff" stroke="#9a1a92" stroke-width="1.200"/><circle cx="1417.6" cy="752.8" r="3.700" fill="#fff" stroke="#9a1a92" stroke-width="1.200"/><path d="M872.8 791.6L982.7 771.5L1093.4 773.5L1200.3 771.5L1310.6 790.8L1417.6 789.0" fill="none" stroke="#3333cc" stroke-width="3" stroke-linejoin="round"/><circle cx="872.8" cy="791.6" r="3.700" fill="#fff" stroke="#3333cc" stroke-width="1.200"/><circle cx="982.7" cy="771.5" r="3.700" fill="#fff" stroke="#3333cc" stroke-width="1.200"/><circle cx="1093.4" cy="773.5" r="3.700" fill="#fff" stroke="#3333cc" stroke-width="1.200"/><circle cx="1200.3" cy="771.5" r="3.700" fill="#fff" stroke="#3333cc" stroke-width="1.200"/><circle cx="1310.6" cy="790.8" r="3.700" fill="#fff" stroke="#3333cc" stroke-width="1.200"/><circle cx="1417.6" cy="789.0" r="3.700" fill="#fff" stroke="#3333cc" stroke-width="1.200"/><path d="M872.8 697.3L982.7 705.0L1093.4 700.5L1200.3 694.5L1310.6 698.9L1417.6 695.3" fill="none" stroke="#069906" stroke-width="3" stroke-linejoin="round"/><circle cx="872.8" cy="697.3" r="3.700" fill="#fff" stroke="#069906" stroke-width="1.200"/><circle cx="982.7" cy="705.0" r="3.700" fill="#fff" stroke="#069906" stroke-width="1.200"/><circle cx="1093.4" cy="700.5" r="3.700" fill="#fff" stroke="#069906" stroke-width="1.200"/><circle cx="1200.3" cy="694.5" r="3.700" fill="#fff" stroke="#069906" stroke-width="1.200"/><circle cx="1310.6" cy="698.9" r="3.700" fill="#fff" stroke="#069906" stroke-width="1.200"/><circle cx="1417.6" cy="695.3" r="3.700" fill="#fff" stroke="#069906" stroke-width="1.200"/><path d="M872.8 699.8L982.7 700.0L1093.4 694.1L1200.3 700.0L1417.6 703.4" fill="none" stroke="#ffcc00" stroke-width="3" stroke-linejoin="round"/><circle cx="872.8" cy="699.8" r="3.700" fill="#fff" stroke="#ffcc00" stroke-width="1.200"/><circle cx="982.7" cy="700.0" r="3.700" fill="#fff" stroke="#ffcc00" stroke-width="1.200"/><circle cx="1093.4" cy="694.1" r="3.700" fill="#fff" stroke="#ffcc00" stroke-width="1.200"/><circle cx="1200.3" cy="700.0" r="3.700" fill="#fff" stroke="#ffcc00" stroke-width="1.200"/><circle cx="1417.6" cy="703.4" r="3.700" fill="#fff" stroke="#ffcc00" stroke-width="1.200"/><path d="M872.8 863.3L982.7 821.7L1200.3 831.2L1310.6 856.0L1417.6 854.6" fill="none" stroke="#1f3a68" stroke-width="3" stroke-linejoin="round"/><circle cx="872.8" cy="863.3" r="3.700" fill="#fff" stroke="#1f3a68" stroke-width="1.200"/><circle cx="982.7" cy="821.7" r="3.700" fill="#fff" stroke="#1f3a68" stroke-width="1.200"/><circle cx="1200.3" cy="831.2" r="3.700" fill="#fff" stroke="#1f3a68" stroke-width="1.200"/><circle cx="1310.6" cy="856.0" r="3.700" fill="#fff" stroke="#1f3a68" stroke-width="1.200"/><circle cx="1417.6" cy="854.6" r="3.700" fill="#fff" stroke="#1f3a68" stroke-width="1.200"/><path d="M872.8 688.4L982.7 718.3L1093.4 702.4L1200.3 718.3L1310.6 718.9L1417.6 726.0" fill="none" stroke="#8eb0c8" stroke-width="3" stroke-linejoin="round"/><circle cx="872.8" cy="688.4" r="3.700" fill="#fff" stroke="#8eb0c8" stroke-width="1.200"/><circle cx="982.7" cy="718.3" r="3.700" fill="#fff" stroke="#8eb0c8" stroke-width="1.200"/><circle cx="1093.4" cy="702.4" r="3.700" fill="#fff" stroke="#8eb0c8" stroke-width="1.200"/><circle cx="1200.3" cy="718.3" r="3.700" fill="#fff" stroke="#8eb0c8" stroke-width="1.200"/><circle cx="1310.6" cy="718.9" r="3.700" fill="#fff" stroke="#8eb0c8" stroke-width="1.200"/><circle cx="1417.6" cy="726.0" r="3.700" fill="#fff" stroke="#8eb0c8" stroke-width="1.200"/><path d="M873.4 672.5H1475" stroke="#e03a3a" stroke-width="2.400" stroke-dasharray="2 2"/><rect x="930.4" y="917.500" width="13" height="10" fill="#8eb0c8"/><text x="947" y="927.200" font-size="10" fill="#666">Corporate Cybersecurity</text><rect x="1061.8" y="917.500" width="13" height="10" fill="#1f3a68"/><text x="1078.3" y="927.200" font-size="10" fill="#666">Corporate IT</text><rect x="1140.9" y="917.500" width="13" height="10" fill="#ffcc00"/><text x="1157.4" y="927.200" font-size="10" fill="#666">Germany</text><rect x="1205.4" y="917.500" width="13" height="10" fill="#069906"/><text x="1221.9" y="927.200" font-size="10" fill="#666">Lyon</text><rect x="1249.5" y="917.500" width="13" height="10" fill="#3333cc"/><text x="1266" y="927.200" font-size="10" fill="#666">Paris</text><rect x="1295.1" y="917.500" width="13" height="10" fill="#9a1a92"/><text x="1311.6" y="927.200" font-size="10" fill="#666">Singapour</text></svg>
</div></div>
<svg class="i" style="left:1748px;top:540px" width="20" height="26" viewBox="1748 540 20 26"><path d="M1752.400 543.300V559.200L1756.500 556.100L1758.900 561.400L1761.800 560.100L1759.400 555.200L1763.800 554.900Z" fill="#fff" stroke="#14141e" stroke-width="1.100" stroke-linejoin="round"/></svg>
</body></html>
